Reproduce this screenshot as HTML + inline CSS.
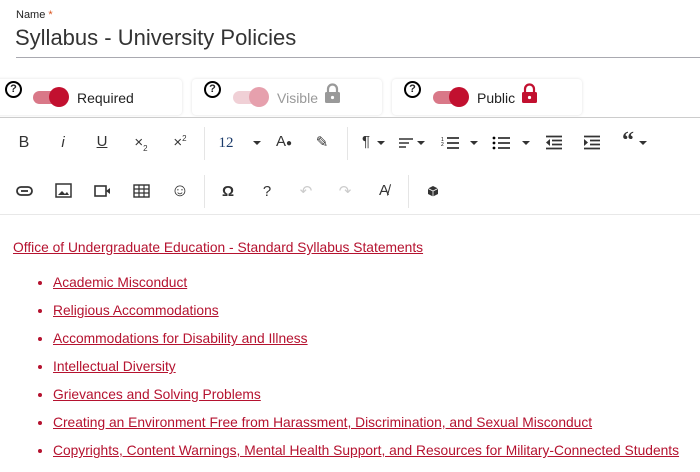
<!DOCTYPE html>
<html><head><style>
body{margin:0;width:700px;height:472px;overflow:hidden;background:#fff;font-family:"Liberation Sans",sans-serif;position:relative;color:#222}
.a{position:absolute}
.card{position:absolute;top:79px;height:36px;background:#fff;border-radius:4px;box-shadow:0 0 3px rgba(0,0,0,.12)}
.q{position:absolute;top:2px;width:13px;height:13px;border:2px solid #000;border-radius:50%;font-size:11px;font-weight:bold;text-align:center;line-height:13px}
.trk{position:absolute;top:12px;width:34px;height:13px;border-radius:7px;background:#d97888}
.knob{position:absolute;top:8px;width:20px;height:20px;border-radius:50%;background:#c2102f}
.lbl{position:absolute;top:11px;font-size:14px}
.ic{position:absolute;font-size:15px;color:#333;transform:translateX(-50%)}
.sep{position:absolute;width:1px;background:#e5e5e5}
.car{position:absolute;width:0;height:0;border-left:4px solid transparent;border-right:4px solid transparent;border-top:4px solid #333}
a{color:#b5122f;text-decoration:underline}
ul{position:absolute;left:13px;top:272px;margin:0;padding-left:40px;font-size:13.8px;color:#b5122f}
li{height:28px;line-height:22px}
</style></head><body>
<div class="a" style="left:16px;top:9px;font-size:11px;color:#222">Name <span style="color:#d9531e">*</span></div>
<div class="a" style="left:15px;top:25px;font-size:22px;color:#333">Syllabus - University Policies</div>
<div class="a" style="left:16px;top:57px;width:684px;height:1px;background:#a9a9b0"></div>

<div class="card" style="left:-4px;width:186px"><div class="q" style="left:9px">?</div><div class="trk" style="left:37px"></div><div class="knob" style="left:53px"></div><div class="lbl" style="left:81px">Required</div></div>
<div class="card" style="left:192px;width:190px"><div class="q" style="left:12px">?</div><div class="trk" style="left:41px;background:#f0d0d6"></div><div class="knob" style="left:57px;background:#e6a0ad"></div><div class="lbl" style="left:85px;color:#999">Visible</div>
<svg class="a" style="left:132px;top:4px" width="17" height="20" viewBox="0 0 17 20"><path d="M4 9V6a4.5 4.5 0 0 1 9 0v3" stroke="#999" stroke-width="2.2" fill="none"/><rect x="1" y="9" width="15" height="11" rx="1.5" fill="#999"/><circle cx="8.5" cy="14.5" r="1.6" fill="#fff"/></svg></div>
<div class="card" style="left:392px;width:190px"><div class="q" style="left:12px">?</div><div class="trk" style="left:41px"></div><div class="knob" style="left:57px"></div><div class="lbl" style="left:85px">Public</div>
<svg class="a" style="left:129px;top:4px" width="17" height="20" viewBox="0 0 17 20"><path d="M4 9V6a4.5 4.5 0 0 1 9 0v3" stroke="#c2102f" stroke-width="2.2" fill="none"/><rect x="1" y="9" width="15" height="11" rx="1.5" fill="#c2102f"/><circle cx="8.5" cy="14.5" r="1.6" fill="#fff"/></svg></div>
<div class="a" style="left:0;top:117px;width:700px;height:1px;background:#ccc"></div>

<div class="ic" style="left:24px;top:134px;font-size:16px">B</div>
<div class="ic" style="left:63px;top:134px;font-style:italic">i</div>
<div class="ic" style="left:102px;top:133px;text-decoration:underline">U</div>
<div class="ic" style="left:141px;top:134px">×<sub style="font-size:8px">2</sub></div>
<div class="ic" style="left:180px;top:134px">×<sup style="font-size:8px">2</sup></div>
<div class="sep" style="left:204px;top:127px;height:33px"></div>
<div class="ic" style="left:226px;top:135px;font-family:'Liberation Serif';color:#1a3a6a">12</div>
<div class="car" style="left:253px;top:141px"></div>
<div class="ic" style="left:284px;top:133px">A<span style="font-size:10px">●</span></div>
<div class="ic" style="left:322px;top:133px">✎</div>
<div class="sep" style="left:347px;top:127px;height:33px"></div>
<div class="ic" style="left:366px;top:133px">¶</div><div class="car" style="left:377px;top:141px"></div>
<svg class="a" style="left:398px;top:137px" width="16" height="12"><path d="M1 2h14M1 6h10M1 10h7" stroke="#333" stroke-width="1.6"/></svg><div class="car" style="left:417px;top:141px"></div>
<svg class="a" style="left:441px;top:136px" width="18" height="14"><path d="M6 2h12M6 7h12M6 12h12" stroke="#333" stroke-width="1.8"/><text x="0" y="5" font-size="5" font-family="Liberation Sans">1</text><text x="0" y="10" font-size="5" font-family="Liberation Sans">2</text></svg><div class="car" style="left:470px;top:141px"></div>
<svg class="a" style="left:492px;top:136px" width="18" height="14"><path d="M6 2h12M6 7h12M6 12h12" stroke="#333" stroke-width="1.8"/><circle cx="2" cy="2" r="1.4"/><circle cx="2" cy="7" r="1.4"/><circle cx="2" cy="12" r="1.4"/></svg><div class="car" style="left:522px;top:141px"></div>
<svg class="a" style="left:545px;top:135px" width="18" height="15"><path d="M1 1.5h16M7 5.5h10M7 9.5h10M1 13.5h16" stroke="#333" stroke-width="1.7"/><path d="M5 4v7L1 7.5z" fill="#333"/></svg>
<svg class="a" style="left:583px;top:135px" width="18" height="15"><path d="M1 1.5h16M7 5.5h10M7 9.5h10M1 13.5h16" stroke="#333" stroke-width="1.7"/><path d="M1 4v7l4-3.5z" fill="#333"/></svg>
<div class="ic" style="left:628px;top:128px;font-size:24px;font-weight:bold;font-family:'Liberation Serif'">“</div><div class="car" style="left:639px;top:141px"></div>

<svg class="a" style="left:16px;top:186px" width="17" height="10"><rect x="1" y="1" width="15" height="8" rx="4" fill="none" stroke="#333" stroke-width="1.8"/><path d="M5 5h7" stroke="#333" stroke-width="1.8"/></svg>
<svg class="a" style="left:55px;top:183px" width="17" height="15"><rect x="1" y="1" width="15" height="13" fill="none" stroke="#333" stroke-width="1.5"/><path d="M3 12l4-4 3 3 2-2 2 3z" fill="#333"/></svg>
<svg class="a" style="left:94px;top:185px" width="17" height="12"><rect x="1" y="1" width="11" height="10" fill="none" stroke="#333" stroke-width="1.6"/><path d="M12 6l4-3v6z" fill="#333"/></svg>
<svg class="a" style="left:133px;top:184px" width="17" height="14"><rect x="1" y="1" width="15" height="12" fill="none" stroke="#333" stroke-width="1.4"/><path d="M1 5h15M1 9h15M6 1v12M11 1v12" stroke="#333" stroke-width="1.2"/></svg>
<div class="ic" style="left:180px;top:180px;font-size:18px">☺</div>
<div class="sep" style="left:204px;top:175px;height:33px"></div>
<div class="ic" style="left:228px;top:183px;font-weight:bold">Ω</div>
<div class="ic" style="left:267px;top:183px">?</div>
<div class="ic" style="left:306px;top:182px;color:#ccc">↶</div>
<div class="ic" style="left:345px;top:182px;color:#ccc">↷</div>
<div class="ic" style="left:384px;top:182px">A̸</div>
<div class="sep" style="left:408px;top:175px;height:33px"></div>
<svg class="a" style="left:427px;top:185px" width="12" height="12"><path d="M6 1l5 2.5v5.5L6 11.5 1 9V3.5z" fill="#333"/><path d="M1 3.5L6 6l5-2.5M6 6v5.5" stroke="#fff" stroke-width=".8" fill="none"/></svg>
<div class="a" style="left:0;top:214px;width:700px;height:1px;background:#e8e8e8"></div>

<div class="a" style="left:13px;top:240px;font-size:13.8px"><a>Office of Undergraduate Education - Standard Syllabus Statements</a></div>
<ul>
<li><a>Academic Misconduct</a></li>
<li><a>Religious Accommodations</a></li>
<li><a>Accommodations for Disability and Illness</a></li>
<li><a>Intellectual Diversity</a></li>
<li><a>Grievances and Solving Problems</a></li>
<li><a>Creating an Environment Free from Harassment, Discrimination, and Sexual Misconduct</a></li>
<li><a>Copyrights, Content Warnings, Mental Health Support, and Resources for Military-Connected Students</a></li>
</ul>
</body></html>
